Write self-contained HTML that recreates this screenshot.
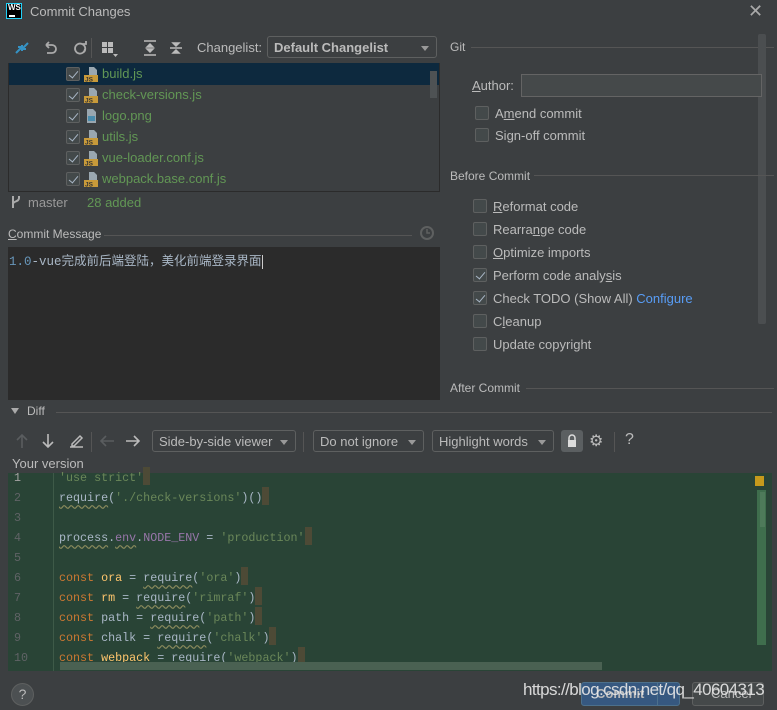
<!DOCTYPE html>
<html><head><meta charset="utf-8">
<style>
*{box-sizing:border-box;margin:0;padding:0}
body{width:777px;height:710px;background:#3c3f41;font-family:"Liberation Sans","Noto Sans CJK SC",sans-serif;font-size:13px;color:#bbbbbb;position:relative;overflow:hidden}
.a{position:absolute;white-space:nowrap}
.cb{position:absolute;width:14px;height:14px;border:1px solid #5e6060;background:#43494a;border-radius:2px}
.cb.on::after{content:"";position:absolute;left:4px;top:1px;width:4px;height:8px;border:solid #a9b7c6;border-width:0 1.5px 1.5px 0;transform:rotate(40deg)}
.sep{position:absolute;height:1px;background:#555}
.dd{position:absolute;border:1px solid #5e6060;border-radius:3px;height:22px;padding:3px 6px;color:#bbb;font-size:13px}
.dd::after{content:"";position:absolute;right:7px;top:9px;border:4px solid transparent;border-top:5px solid #999}
.fi{position:absolute;left:84px;width:14px;height:16px}
.fn{position:absolute;left:102px;color:#629755;font-size:13px}
.code{position:absolute;left:59px;font-family:"Liberation Mono",monospace;font-size:11.7px;color:#a9b7c6}
.ln{position:absolute;left:14px;width:20px;font-family:"Liberation Mono",monospace;font-size:11.7px;color:#606366}
.k{color:#cc7832}.s{color:#6a8759}.w{text-decoration:underline wavy #8a8a5c;text-underline-offset:3px}
.m{display:inline-block;width:7px;height:18px;background:#4d4a36;vertical-align:middle;margin-top:-4px}
</style></head><body>
<div class="a" style="left:6px;top:3px;width:16px;height:16px;background:#000;border:1px solid #21d0f7"><span style="position:absolute;left:1px;top:-1px;font:bold 8px 'Liberation Sans';color:#fff">WS</span><span style="position:absolute;left:2px;top:11px;width:6px;height:1.5px;background:#fff"></span></div>
<div class="a" style="left:30px;top:4px;font-size:13px;color:#bbb">Commit Changes</div>
<div class="a" style="left:748px;top:1px;font-size:18px;color:#aaa">✕</div>
<svg class="a" style="left:14px;top:40px" width="120" height="16"><path d="M2 13l6-6M8 7H4M8 7v4M14 3l-6 6M8 9h4M8 9V5" stroke="#3592c4" stroke-width="2" fill="none"/><path d="M32 5h6a4 4 0 0 1 0 8h-5M32 5l3-3M32 5l3 3" stroke="#aaa" stroke-width="1.8" fill="none"/><path d="M68 4a5 5 0 1 0 3 5M68 4h4V1M70 12a5 5 0 0 0 -2-8" stroke="#aaa" stroke-width="1.8" fill="none"/></svg>
<div class="a" style="left:91px;top:38px;width:1px;height:20px;background:#555"></div>
<svg class="a" style="left:102px;top:40px" width="90" height="18"><rect x="0" y="2" width="5" height="5" fill="#bbb"/><rect x="6" y="2" width="5" height="5" fill="#bbb"/><rect x="0" y="8" width="5" height="5" fill="#bbb"/><rect x="6" y="8" width="5" height="5" fill="#bbb"/><path d="M11 14h5l-2.5 3z" fill="#bbb"/><path d="M42 1h12M42 15h12M48 4l-3 3h6zM48 12l-3-3h6z" stroke="#bbb" stroke-width="1.5" fill="#bbb"/><path d="M68 8h12M74 6l-3-3h6zM74 10l-3 3h6z" stroke="#bbb" stroke-width="1.5" fill="#bbb"/></svg>
<div class="a" style="left:197px;top:40px">Changelist:</div>
<div class="dd" style="left:267px;top:36px;width:170px;font-weight:bold;color:#bbb">Default Changelist</div>
<div class="a" style="left:8px;top:63px;width:432px;height:129px;border:1px solid #2b2b2b;border-top:none"></div>
<div class="a" style="left:9px;top:63px;width:430px;height:22px;background:#0d293e"></div>
<div class="a" style="left:430px;top:71px;width:7px;height:27px;background:#4e5254"></div>
<div id="files"></div>
<svg class="a" style="left:10px;top:195px" width="12" height="14"><path d="M3 1v12M3 9c0-3 6-2 6-6V1" stroke="#aaa" stroke-width="2" fill="none"/></svg>
<div class="a" style="left:28px;top:195px;color:#999">master</div>
<div class="a" style="left:87px;top:195px;color:#629755">28 added</div>
<div class="a" style="left:8px;top:227px;font-size:12px"><u>C</u>ommit Message</div>
<div class="sep" style="left:104px;top:235px;width:308px"></div>
<svg class="a" style="left:420px;top:226px" width="14" height="14"><circle cx="7" cy="7" r="6" stroke="#5e6060" stroke-width="2" fill="none"/><path d="M7 3v4h3" stroke="#5e6060" stroke-width="1.5" fill="none"/></svg>
<div class="a" style="left:8px;top:247px;width:432px;height:153px;background:#2b2b2b"></div>
<div class="a" style="left:9px;top:250px;font-family:'Liberation Mono','Noto Sans CJK SC',monospace;font-size:12.5px;color:#a9b7c6"><span style="color:#6897bb">1.0</span>-vue完成前后端登陆，美化前端登录界面<span style="display:inline-block;width:1px;height:14px;background:#ccc;vertical-align:middle"></span></div>
<div class="a" style="left:450px;top:40px;font-size:12px">Git</div>
<div class="sep" style="left:471px;top:47px;width:303px"></div>
<div class="a" style="left:758px;top:34px;width:8px;height:290px;background:#4b4e50;border-radius:2px"></div>
<div class="a" style="left:472px;top:78px"><u>A</u>uthor:</div>
<div class="a" style="left:521px;top:74px;width:241px;height:23px;border:1px solid #646464;background:#45494a"></div>
<div class="cb" style="left:475px;top:106px"></div><div class="a" style="left:495px;top:106px">A<u>m</u>end commit</div>
<div class="cb" style="left:475px;top:128px"></div><div class="a" style="left:495px;top:128px">Si<u>g</u>n-off commit</div>
<div class="a" style="left:450px;top:169px;font-size:12px">Before Commit</div>
<div class="sep" style="left:534px;top:175px;width:240px"></div>
<div class="cb" style="left:473px;top:199px"></div><div class="a" style="left:493px;top:199px"><u>R</u>eformat code</div>
<div class="cb" style="left:473px;top:222px"></div><div class="a" style="left:493px;top:222px">Rearra<u>n</u>ge code</div>
<div class="cb" style="left:473px;top:245px"></div><div class="a" style="left:493px;top:245px"><u>O</u>ptimize imports</div>
<div class="cb on" style="left:473px;top:268px"></div><div class="a" style="left:493px;top:268px">Perform code analy<u>s</u>is</div>
<div class="cb on" style="left:473px;top:291px"></div><div class="a" style="left:493px;top:291px">Check TODO (Show All) <span style="color:#589df6">Configure</span></div>
<div class="cb" style="left:473px;top:314px"></div><div class="a" style="left:493px;top:314px">C<u>l</u>eanup</div>
<div class="cb" style="left:473px;top:337px"></div><div class="a" style="left:493px;top:337px">Update copyright</div>
<div class="a" style="left:450px;top:381px;font-size:12px">After Commit</div>
<div class="sep" style="left:526px;top:388px;width:248px"></div>
<div class="a" style="left:11px;top:408px;border:4px solid transparent;border-top:6px solid #aaa;border-bottom:none;width:0;height:0"></div>
<div class="a" style="left:27px;top:404px;font-size:12px">Diff</div>
<div class="sep" style="left:56px;top:412px;width:716px"></div>
<svg class="a" style="left:14px;top:432px" width="130" height="18"><path d="M8 16V3M3 8l5-5 5 5" stroke="#5a5d5f" stroke-width="1.6" fill="none"/><path d="M34 2v13M29 10l5 5 5-5" stroke="#bbb" stroke-width="1.6" fill="none"/><path d="M56 15h13M58 12l8-8 2 2-8 8h-2z" stroke="#bbb" stroke-width="1.5" fill="none"/><path d="M87 9h13M92 4l-5 5 5 5" stroke="#5a5d5f" stroke-width="1.6" fill="none"/><path d="M112 9h13M120 4l5 5-5 5" stroke="#bbb" stroke-width="1.6" fill="none"/></svg>
<div class="a" style="left:91px;top:432px;width:1px;height:20px;background:#555"></div>
<div class="dd" style="left:152px;top:430px;width:144px">Side-by-side viewer</div>
<div class="a" style="left:303px;top:432px;width:1px;height:20px;background:#555"></div>
<div class="dd" style="left:313px;top:430px;width:111px">Do not ignore</div>
<div class="dd" style="left:432px;top:430px;width:122px">Highlight words</div>
<div class="a" style="left:561px;top:430px;width:22px;height:22px;background:#5b5f61;border-radius:3px"></div>
<svg class="a" style="left:565px;top:433px" width="14" height="16"><path d="M4 7V5a3 3 0 0 1 6 0v2" stroke="#ddd" stroke-width="1.5" fill="none"/><rect x="3" y="7" width="8" height="7" fill="#ddd"/></svg>
<div class="a" style="left:589px;top:431px;font-size:16px;color:#bbb">⚙</div>
<div class="a" style="left:614px;top:432px;width:1px;height:20px;background:#555"></div>
<div class="a" style="left:625px;top:431px;font-size:16px;color:#bbb">?</div>
<div class="a" style="left:12px;top:456px">Your version</div>
<div class="a" style="left:8px;top:473px;width:764px;height:198px;background:#294436"></div>
<div class="a" style="left:53px;top:473px;width:1px;height:198px;background:#3e5a48"></div>
<div class="a" style="left:757px;top:490px;width:9px;height:155px;background:#3f6e4d"></div>
<div class="a" style="left:760px;top:492px;width:5px;height:35px;background:#4e7a5a"></div>
<div class="a" style="left:755px;top:476px;width:9px;height:10px;background:#c59a1c"></div>
<div id="code"></div>
<div class="a" style="left:60px;top:662px;width:542px;height:8px;background:#4a6152"></div>
<div class="a" style="left:11px;top:683px;width:23px;height:23px;border-radius:50%;background:#4c5052;border:1px solid #5e6060;text-align:center;font-size:14px;line-height:21px;color:#bbb">?</div>
<div class="a" style="left:581px;top:682px;width:99px;height:24px;background:#365880;border:1px solid #4c708c;border-radius:3px"></div>
<div class="a" style="left:657px;top:683px;width:1px;height:22px;background:#4c708c"></div>
<div class="a" style="left:596px;top:686px;font-weight:bold;color:#bbb">Commit</div>
<div class="a" style="left:692px;top:682px;width:72px;height:24px;border:1px solid #5e6060;border-radius:3px;background:#45494a"></div>
<div class="a" style="left:711px;top:686px;color:#bbb">Cancel</div>
<div class="a" style="left:523px;top:680px;font-size:17px;color:#e8e8e8;letter-spacing:-0.6px;opacity:.9">https://blog.csdn.net/qq_40604313</div>
<script>
var files=["build.js","check-versions.js","logo.png","utils.js","vue-loader.conf.js","webpack.base.conf.js"],h="";
files.forEach(function(f,i){var y=67+i*21;
h+='<div class="cb on" style="left:66px;top:'+y+'px"></div>';
if(f.indexOf("png")>0)h+='<svg class="fi" style="top:'+(y-1)+'px"><path d="M3 1h6l3 3v11H3z" fill="#9aa7b0"/><rect x="4" y="8" width="7" height="5" fill="#4a8cad"/></svg>';
else h+='<svg class="fi" style="top:'+(y-1)+'px"><path d="M5 1h5l3 3v6H5z" fill="#9aa7b0"/><rect x="0" y="9" width="14" height="7" fill="#c89a3a"/><text x="1" y="15.5" font-size="6.5" font-family="Liberation Sans" font-weight="bold" fill="#333">JS</text></svg>';
h+='<div class="fn" style="top:'+(y-1)+'px">'+f+'</div>';});
document.getElementById("files").innerHTML=h;
var M='<span class="m"></span>',R='<span class="w">require</span>';
var L=["<span class=s>'use strict'</span>"+M,R+"(<span class=s>'./check-versions'</span>)()"+M,"",'<span class=w>process</span>.<span class=w style="color:#9876aa">env</span>.<span style="color:#9876aa">NODE_ENV</span> = <span class=s>\'production\'</span>'+M,"",
"<span class=k>const</span> <span style='color:#ffc66d'>ora</span> = "+R+"(<span class=s>'ora'</span>)"+M,"<span class=k>const</span> <span style='color:#ffc66d'>rm</span> = "+R+"(<span class=s>'rimraf'</span>)"+M,"<span class=k>const</span> path = "+R+"(<span class=s>'path'</span>)"+M,"<span class=k>const</span> chalk = "+R+"(<span class=s>'chalk'</span>)"+M,"<span class=k>const</span> <span style='color:#ffc66d'>webpack</span> = "+R+"(<span class=s>'webpack'</span>)"+M];
var c="";L.forEach(function(l,i){var y=471+i*20;c+='<div class="ln" style="top:'+y+'px;'+(i==0?'color:#a4a3a3':'')+'">'+(i+1)+'</div><div class="code" style="top:'+y+'px">'+l+'</div>';});
document.getElementById("code").innerHTML=c;
</script>
</body></html>
